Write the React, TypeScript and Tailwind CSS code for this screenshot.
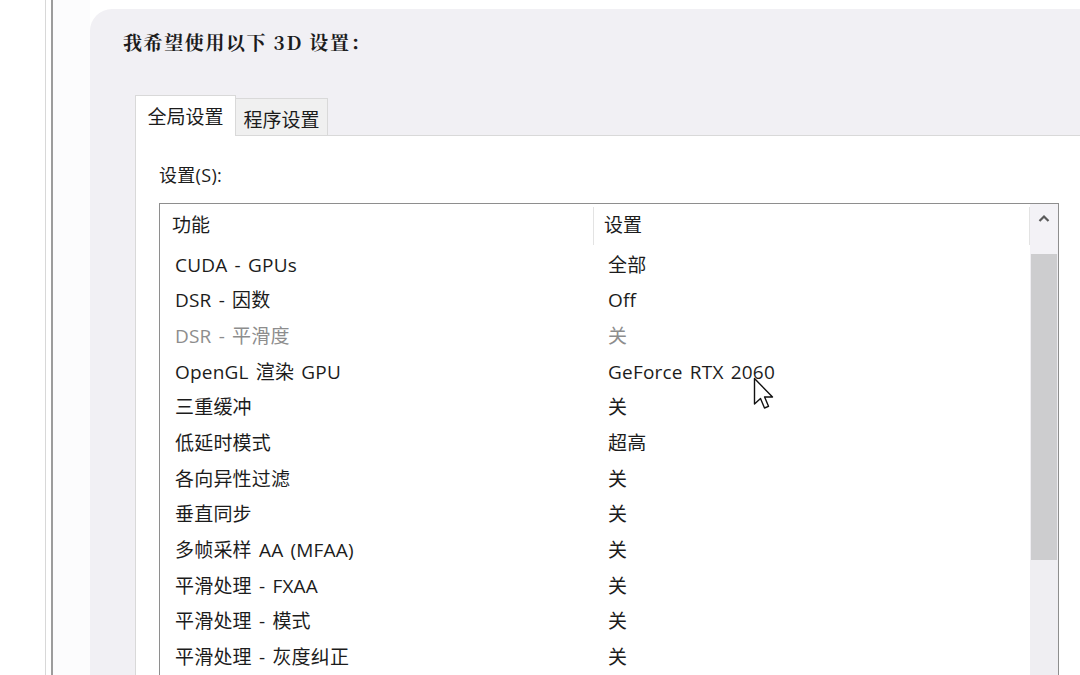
import React from 'react';

type Row = { name: string; value: string; disabled?: boolean };

const rows: Row[] = [
  { name: 'CUDA - GPUs', value: '全部' },
  { name: 'DSR - 因数', value: 'Off' },
  { name: 'DSR - 平滑度', value: '关', disabled: true },
  { name: 'OpenGL 渲染 GPU', value: 'GeForce RTX 2060' },
  { name: '三重缓冲', value: '关' },
  { name: '低延时模式', value: '超高' },
  { name: '各向异性过滤', value: '关' },
  { name: '垂直同步', value: '关' },
  { name: '多帧采样 AA (MFAA)', value: '关' },
  { name: '平滑处理 - FXAA', value: '关' },
  { name: '平滑处理 - 模式', value: '关' },
  { name: '平滑处理 - 灰度纠正', value: '关' },
];

function Cursor() {
  return (
    <svg className="absolute left-[753px] top-[377px]" width="24" height="36" viewBox="0 0 24 36">
      <path
        d="M1.5 1.5 L1.5 27 L7.5 21.5 L11.5 31 L15.5 29.3 L11.6 20 L19.5 20 Z"
        fill="#ffffff"
        stroke="#111111"
        strokeWidth="1.4"
        strokeLinejoin="round"
      />
    </svg>
  );
}

export default function App() {
  return (
    <div className="relative w-[1080px] h-[675px] overflow-hidden bg-white flex font-['Open_Sans','Noto_Sans_CJK_SC',sans-serif] text-[#1c1c1c]">
      {/* window frame on the left */}
      <div className="w-[46px] shrink-0 border-r border-[#d8d8d8]" />
      <div className="w-[5px] shrink-0" />
      <div className="w-[2px] shrink-0 bg-[#9c9c9c]" />
      <div className="w-[37px] shrink-0 bg-[#fcfcfd]" />

      {/* settings panel */}
      <div className="flex-1 mt-[9px] rounded-tl-[22px] bg-[#f1f0f4] flex flex-col">
        <h1 className="ml-[33px] mt-[20px] text-[19px] leading-[26px] font-bold font-['Noto_Serif_CJK_SC','Noto_Sans_CJK_SC',serif] tracking-[1.6px]">
          我希望使用以下 3D 设置：
        </h1>

        <div className="ml-[45px] mt-[40px] flex items-end h-[41px] font-['Noto_Sans_CJK_SC',sans-serif]">
          <div className="h-[41px] w-[101px] bg-white border border-b-0 border-[#d9d9d9] flex items-center justify-center text-[19px] leading-none pb-[2px] relative z-10 -mb-px">
            全局设置
          </div>
          <div className="h-[37px] w-[92px] bg-[#f0f0f0] border border-l-0 border-b-0 border-[#d9d9d9] flex items-center justify-center text-[19px] leading-none pt-[2px]">
            程序设置
          </div>
        </div>

        <div className="ml-[45px] flex-1 bg-white border-l border-t border-[#d9d9d9] pl-[23px] pt-[27px]">
          <div className="text-[18px] leading-[24px] tracking-[0.3px]">设置(S):</div>

          <div className="mt-[16px] w-[900px] h-[500px] border border-[#8e8e8e] flex">
            <div className="flex-1 flex flex-col">
              <div className="h-[43px] shrink-0 flex items-center text-[19px]">
                <div className="w-[434px] h-[38px] border-r border-[#e3e3e3] pl-[12px] flex items-center">功能</div>
                <div className="flex-1 h-[38px] border-r border-[#e3e3e3] pl-[10px] flex items-center">设置</div>
              </div>
              {rows.map((r) => (
                <div
                  key={r.name}
                  className={`h-[35.7px] shrink-0 flex items-center text-[19px] tracking-[0.2px] [word-spacing:2px] ${r.disabled ? 'text-[#8d8d8d]' : ''}`}
                >
                  <div className="w-[433px] pl-[15px] whitespace-nowrap">{r.name}</div>
                  <div className="flex-1 pl-[15px] whitespace-nowrap">{r.value}</div>
                </div>
              ))}
            </div>

            {/* scrollbar */}
            <div className="w-[28px] shrink-0 bg-[#efeef2] flex flex-col">
              <div className="h-[50px] flex items-start justify-center pt-[10px] bg-[#f3f2f6]">
                <svg width="12" height="9" viewBox="0 0 12 9">
                  <path d="M1.5 7 L6 2.5 L10.5 7" fill="none" stroke="#5a5a5a" strokeWidth="2.2" />
                </svg>
              </div>
              <div className="h-[306px] mx-[1px] bg-[#cdcdcf]" />
            </div>
          </div>
        </div>
      </div>

      <Cursor />
    </div>
  );
}
